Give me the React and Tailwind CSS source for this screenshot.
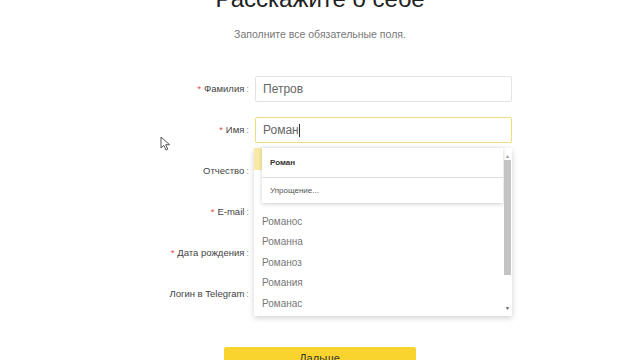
const fields = [
  { label: 'Фамилия', req: true, value: 'Петров' },
  { label: 'Имя', req: true, value: 'Роман', active: true },
  { label: 'Отчество', req: false, value: '' },
  { label: 'E-mail', req: true, value: '' },
  { label: 'Дата рождения', req: true, value: '' },
  { label: 'Логин в Telegram', req: false, value: '' },
]

const options = ['Романос', 'Романна', 'Романоз', 'Романия', 'Романас']

function Cursor() {
  return (
    <svg className="absolute left-[160px] top-[136px]" width="11" height="15" viewBox="0 0 11 15">
      <path d="M1 1 L1 12 L3.8 9.4 L6 14 L7.8 13.2 L5.7 8.7 L9.6 8.7 Z" fill="white" stroke="#555" strokeWidth="1" strokeLinejoin="round" />
    </svg>
  )
}

export default function App() {
  return (
    <div
      className="relative w-[640px] h-[360px] overflow-hidden bg-white text-[#333]"
      style={{ fontFamily: '"Liberation Sans", Arial, sans-serif' }}
    >
      <div className="flex flex-col items-center">
        <h1 className="-mt-[15px] h-[28px] text-[24px] leading-[28px] text-[#222]">Расскажите о себе</h1>
        <p className="mt-[14px] text-[10.5px] leading-[14px] text-[#777]">Заполните все обязательные поля.</p>
      </div>

      <div className="mt-[35px] flex flex-col gap-[15px]">
        {fields.map(f => (
          <div key={f.label} className="flex items-center h-[26px]">
            <div className="w-[250px] text-right text-[9.5px] text-[#444] pr-[1px]">
              {f.req && <span className="text-[#e5534b] mr-[3px]">*</span>}
              {f.label}<span className="ml-[2px] text-[#999]">:</span>
            </div>
            <div
              className={
                'ml-[5px] w-[257px] h-[26px] rounded-[2px] border px-[7px] flex items-center text-[12px] text-[#666] ' +
                (f.active ? 'border-[#f0dc7a]' : 'border-[#e3e3e3]')
              }
            >
              {f.value}
              {f.active && <span className="w-px h-[13px] bg-[#333]" />}
            </div>
          </div>
        ))}
      </div>

      <div className="mt-[40px] flex justify-center">
        <button className="w-[192px] h-[24px] rounded-[2px] bg-[#fad42e] text-[11px] text-[#333] pb-[2px] ml-[-1px]">
          Дальше
        </button>
      </div>

      {/* autocomplete dropdown */}
      <div className="absolute left-[254px] top-[148px] w-[258px] h-[168px] bg-white shadow-[0_2px_6px_rgba(0,0,0,0.18)] flex">
        <div className="flex-1 flex flex-col">
          <div className="flex">
            <div className="w-[8px] h-[22px] bg-[#f8eaa6]" />
            <div className="w-[241px] shadow-[0_1px_4px_rgba(0,0,0,0.2)] bg-white">
              <div className="h-[30px] flex items-center px-[8px] text-[8px] font-bold text-[#333] border-b border-[#ddd]">Роман</div>
              <div className="h-[25px] flex items-center px-[8px] text-[8px] text-[#555]">Упрощение...</div>
            </div>
          </div>
          <div className="mt-[8px] flex flex-col">
            {options.map(o => (
              <div key={o} className="h-[20.5px] flex items-center px-[8px] text-[10px] text-[#777]">{o}</div>
            ))}
          </div>
        </div>
        <div className="w-[9px] flex flex-col items-center pt-[5px] pb-[5px]">
          <span className="text-[5px] leading-[6px] text-[#999]">▲</span>
          <div className="mt-[1px] w-[7px] h-[115px] bg-[#c4c4c4]" />
          <div className="flex-1" />
          <span className="text-[5px] leading-[6px] text-[#555]">▼</span>
        </div>
      </div>

      <Cursor />
    </div>
  )
}
